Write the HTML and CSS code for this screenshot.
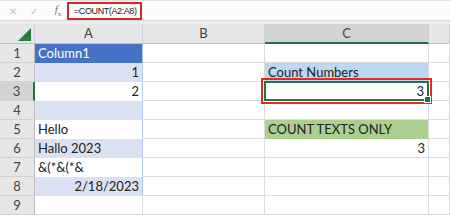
FILE: index.html
```html
<!DOCTYPE html>
<html lang="en">
<head>
  <meta charset="UTF-8">
  <title>COUNT</title>
  <link rel="stylesheet" href="styles.css">
</head>
<body>

  <div class="fbar">
    <span class="ficon">&#x2715;</span>
    <span class="ficon">&#x2713;</span>
    <span class="ficon fx"><i>f</i><sub>x</sub></span>
    <div class="formula">=COUNT(A2:A8)</div>
  </div>

  <div class="sheet">
    <div class="corner"><span class="tri"></span></div>
    <div class="colhead">A</div>
    <div class="colhead">B</div>
    <div class="colhead sel">C</div>
    <div class="colhead"></div>

    <div class="rowhead">1</div>
    <div class="cell hdr">Column1</div>
    <div class="cell"></div>
    <div class="cell"></div>
    <div class="cell"></div>

    <div class="rowhead">2</div>
    <div class="cell band num">1</div>
    <div class="cell"></div>
    <div class="cell lblue">Count Numbers</div>
    <div class="cell"></div>

    <div class="rowhead sel">3</div>
    <div class="cell tbl num">2</div>
    <div class="cell"></div>
    <div class="cell num active">3</div>
    <div class="cell"></div>

    <div class="rowhead">4</div>
    <div class="cell band"></div>
    <div class="cell"></div>
    <div class="cell"></div>
    <div class="cell"></div>

    <div class="rowhead">5</div>
    <div class="cell tbl">Hello</div>
    <div class="cell"></div>
    <div class="cell green">COUNT TEXTS ONLY</div>
    <div class="cell"></div>

    <div class="rowhead">6</div>
    <div class="cell band">Hallo 2023</div>
    <div class="cell"></div>
    <div class="cell num">3</div>
    <div class="cell"></div>

    <div class="rowhead">7</div>
    <div class="cell tbl">&amp;(*&amp;(*&amp;</div>
    <div class="cell"></div>
    <div class="cell"></div>
    <div class="cell"></div>

    <div class="rowhead">8</div>
    <div class="cell band num">2/18/2023</div>
    <div class="cell"></div>
    <div class="cell"></div>
    <div class="cell"></div>

    <div class="rowhead">9</div>
    <div class="cell"></div>
    <div class="cell"></div>
    <div class="cell"></div>
    <div class="cell"></div>
  </div>

</body>
</html>
```

FILE: styles.css
```css
body {
  margin: 0;
  background: #fff;
  font-family: Lato, "Liberation Sans", sans-serif;
  font-size: 13px;
  color: #222;
  width: 450px;
  height: 216px;
  overflow: hidden;
}
.fbar {
  height: 19px;
  display: flex;
  align-items: center;
  background: #fcfcfc;
  border-top: 1px solid #e2e2e2;
  border-bottom: 1px solid #d6d6d6;
  margin-bottom: 3px;
  box-shadow: 0 3px 0 #ececec;
}
.ficon {
  color: #c0c0c0;
  font-size: 10px;
  width: 21px;
  text-align: center;
}
.ficon:first-child {
  margin-left: 2px;
}
.fx {
  color: #777;
  font-family: "Liberation Serif", serif;
  font-size: 11px;
  width: 12px;
  margin-left: 8px;
}
.fx sub {
  font-size: 7px;
}
.formula {
  margin-left: 3px;
  height: 14px;
  line-height: 14px;
  border: 2px solid #d92626;
  padding: 0 3px 0 5px;
  font-size: 9px;
  letter-spacing: -0.4px;
  color: #222;
  font-family: "Liberation Sans", sans-serif;
}
.sheet {
  display: grid;
  grid-template-columns: 35px 108px 122px 164px 21px;
  grid-template-rows: 20px repeat(9, 19px);
}
.corner {
  background: #e6e6e6;
  border-right: 1px solid #cfcfcf;
  border-bottom: 1px solid #bdbdbd;
  position: relative;
}
.tri {
  position: absolute;
  right: 3px;
  bottom: 2px;
  width: 0;
  height: 0;
  border-left: 13px solid transparent;
  border-bottom: 13px solid #2c7a3c;
}
.colhead {
  background: #e6e6e6;
  border-right: 1px solid #cfcfcf;
  border-bottom: 1px solid #bdbdbd;
  text-align: center;
  line-height: 19px;
  color: #444;
  font-size: 13px;
}
.colhead.sel {
  background: #d3d3d3;
  border-bottom: 2px solid #217346;
  line-height: 18px;
}
.rowhead {
  background: #e6e6e6;
  border-right: 1px solid #bdbdbd;
  border-bottom: 1px solid #d2d2d2;
  text-align: center;
  line-height: 19px;
  color: #444;
}
.rowhead.sel {
  background: #d3d3d3;
  border-right: 2px solid #217346;
}
.cell {
  border-right: 1px solid #dcdcdc;
  border-bottom: 1px solid #dcdcdc;
  line-height: 19px;
  padding: 0 3px;
  white-space: nowrap;
  overflow: visible;
}
.num {
  text-align: right;
}
.hdr {
  background: #4472c4;
  color: #fff;
  border-right-color: #b4c6e7;
  border-bottom-color: #4472c4;
}
.band {
  background: #d9e1f2;
  border-right-color: #b4c6e7;
  border-bottom-color: #d9e1f2;
}
.tbl {
  border-right-color: #b4c6e7;
  border-bottom-color: #fff;
}
.lblue {
  background: #bdd7ee;
  border-bottom-color: #bdd7ee;
}
.green {
  background: #a9d08e;
  border-bottom-color: #a9d08e;
}
.active {
  position: relative;
  border: 2px solid #217346;
  margin: -1px 0 0 -1px;
  line-height: 17px;
  outline: 2px solid #e02a2a;
  outline-offset: 1px;
}
.active::after {
  content: "";
  position: absolute;
  right: -4px;
  bottom: -4px;
  width: 5px;
  height: 5px;
  background: #217346;
  border: 1px solid #fff;
}
```
